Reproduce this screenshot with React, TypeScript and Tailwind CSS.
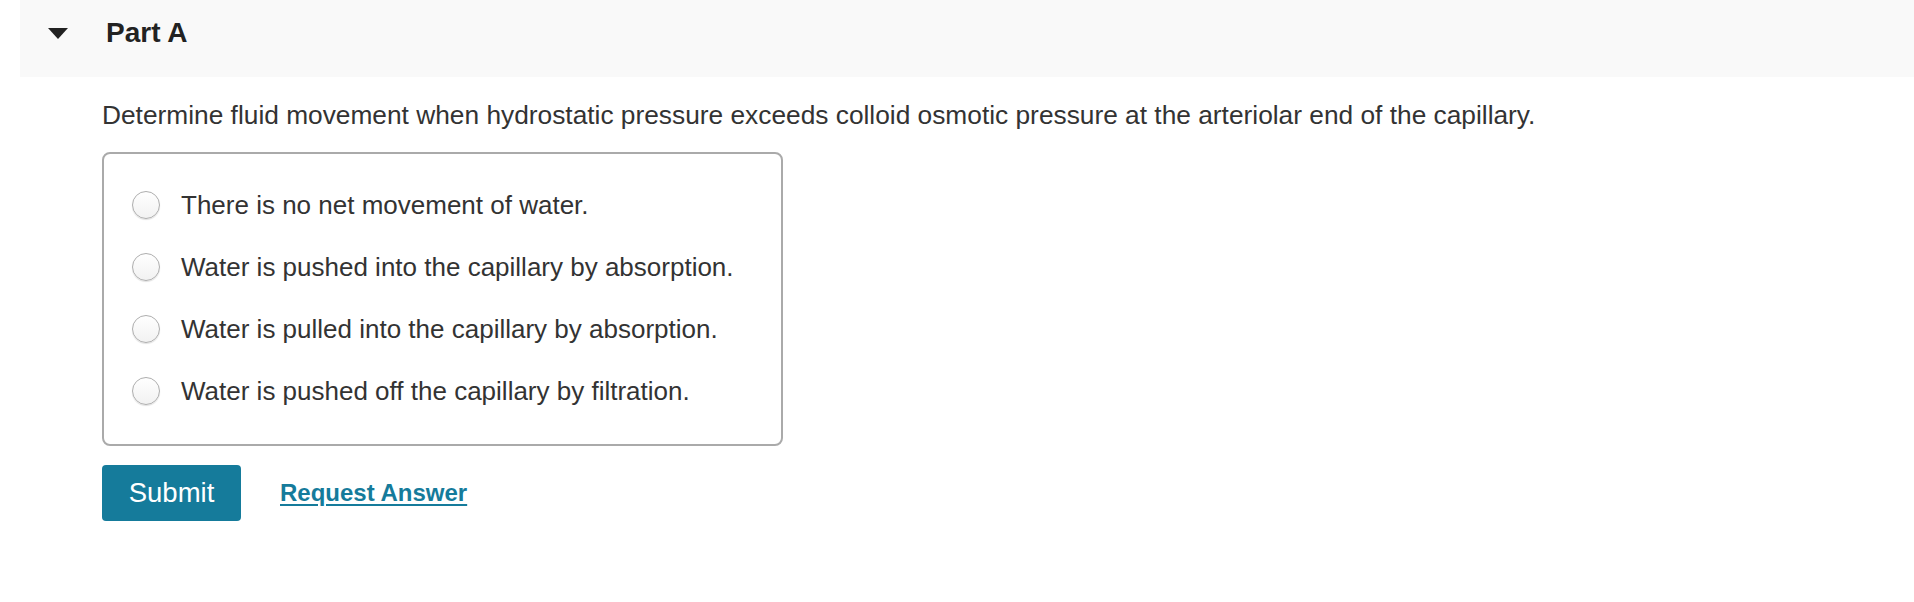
import React from "react";

const options = [
  "There is no net movement of water.",
  "Water is pushed into the capillary by absorption.",
  "Water is pulled into the capillary by absorption.",
  "Water is pushed off the capillary by filtration.",
];

export default function App() {
  return (
    <div
      className="w-[1914px] h-[602px] bg-white pl-[20px] text-[#333333]"
      style={{ fontFamily: '"Liberation Sans", Arial, Helvetica, sans-serif' }}
    >
      <div className="h-[77px] bg-[#f9f9f9] flex items-start pt-[17px]">
        <div className="w-[86px] h-[32px] flex items-center pl-[28px]">
          <svg width="20" height="11" viewBox="0 0 20 11">
            <path d="M0 0 H20 L10 11 Z" fill="#222222" />
          </svg>
        </div>
        <div className="text-[28px] leading-[32px] font-bold text-[#222222]">Part A</div>
      </div>
      <div className="pl-[82px]">
        <p className="mt-[23px] text-[26.3px] leading-[30px]">
          Determine fluid movement when hydrostatic pressure exceeds colloid osmotic pressure at the arteriolar end of the capillary.
        </p>
        <div className="mt-[22px] w-[681px] h-[294px] border-2 border-[#aaaaaa] rounded-[8px] pt-[20px] pb-[22px] pl-[28px] flex flex-col">
          {options.map((o) => (
            <label key={o} className="h-[62px] flex items-center">
              <span className="w-[28px] h-[28px] rounded-full border border-[#aeaeae] bg-gradient-to-b from-white to-[#f2f2f2] shadow-[0_1px_1px_rgba(0,0,0,0.12)] shrink-0" />
              <span className="ml-[21px] text-[26px] leading-[30px]">{o}</span>
            </label>
          ))}
        </div>
        <div className="mt-[19px] flex items-center">
          <button className="w-[139px] h-[56px] rounded-[4px] bg-[#157b9b] text-white text-[27.5px] leading-[30px]">
            Submit
          </button>
          <a className="ml-[39px] text-[24px] leading-[28px] font-bold text-[#157b9b] underline underline-offset-[3px] decoration-[2px]">
            Request Answer
          </a>
        </div>
      </div>
    </div>
  );
}
